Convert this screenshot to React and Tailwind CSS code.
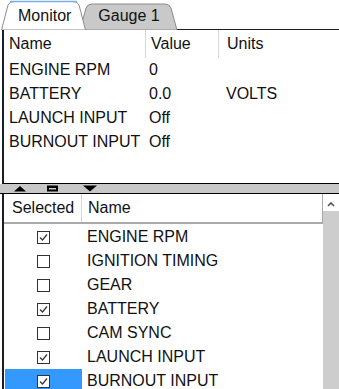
import React from "react";

const monitorRows = [
  { name: "ENGINE RPM", value: "0", units: "" },
  { name: "BATTERY", value: "0.0", units: "VOLTS" },
  { name: "LAUNCH INPUT", value: "Off", units: "" },
  { name: "BURNOUT INPUT", value: "Off", units: "" },
];

const channels = [
  { name: "ENGINE RPM", checked: true },
  { name: "IGNITION TIMING", checked: false },
  { name: "GEAR", checked: false },
  { name: "BATTERY", checked: true },
  { name: "CAM SYNC", checked: false },
  { name: "LAUNCH INPUT", checked: true },
  { name: "BURNOUT INPUT", checked: true, selected: true },
];

/* tab outlines */
const TabShapes = () => (
  <svg className="absolute inset-0" width="339" height="30" viewBox="0 0 339 30">
    <path
      d="M80 30 L86 8 Q87.5 4 92 4 L165 4 Q169.5 4 171 8 L177 30 Z"
      fill="#c9c9c9"
      stroke="#8c8c8c"
      strokeWidth="1"
    />
    <path
      d="M1.5 30 L8 5 Q9.5 1.5 14 1.5 L73 1.5 Q77.5 1.5 79 5 L85.5 30 Z"
      fill="#ffffff"
      stroke="#8c8c8c"
      strokeWidth="1"
    />
    <path d="M10 1.5 L77 1.5" stroke="#7aaee6" strokeWidth="1.5" />
  </svg>
);

const Checkbox = ({ checked }) => (
  <svg width="13" height="13" viewBox="0 0 13 13">
    <rect x="0.5" y="0.5" width="12" height="12" fill="#fff" stroke="#333" />
    {checked && (
      <path d="M3 6.5 L5.5 9 L10 3.5" fill="none" stroke="#333" strokeWidth="1.2" />
    )}
  </svg>
);

export default function App() {
  return (
    <div className="w-[339px] h-[389px] overflow-hidden bg-white text-[16px] text-[#111] font-['Liberation_Sans',Arial,sans-serif] flex flex-col">
      {/* Tabs */}
      <div className="relative h-[29px] shrink-0">
        <TabShapes />
        <div className="relative flex items-center h-[29px] pt-[2px]">
          <span className="pl-[18px] leading-none">Monitor</span>
          <span className="pl-[27px] leading-none">Gauge 1</span>
        </div>
      </div>

      {/* Monitor list */}
      <div className="ml-[2px] h-[155px] shrink-0 border-l-2 border-t border-[#1c1c28] border-b border-b-black flex flex-col">
        <div className="flex h-[28px] items-center">
          <div className="w-[142px] h-full pl-[5px] flex items-center border-r border-[#d6d6d6]">Name</div>
          <div className="w-[73px] h-full pl-[5px] flex items-center border-r border-[#d6d6d6]">Value</div>
          <div className="pl-[8px]">Units</div>
        </div>
        {monitorRows.map((r) => (
          <div key={r.name} className="flex h-[24px] items-center">
            <div className="w-[143px] pl-[5px] whitespace-nowrap">{r.name}</div>
            <div className="w-[77px] pl-[2px]">{r.value}</div>
            <div className="pl-[2px]">{r.units}</div>
          </div>
        ))}
      </div>

      {/* Splitter */}
      <div className="h-[10px] shrink-0 bg-[#c8c8c8] border-b border-black flex items-center">
        <svg width="110" height="9" viewBox="0 0 110 9">
          <path d="M14 7.5 L20 2 L26 7.5 Z" fill="#000" />
          <rect x="47" y="1.5" width="11" height="6" fill="#000" />
          <rect x="49" y="4" width="7" height="1.5" fill="#c8c8c8" />
          <path d="M83 1.5 L97 1.5 L90 7.5 Z" fill="#000" />
        </svg>
      </div>

      {/* Channel list */}
      <div className="flex flex-1 min-h-0">
        <div className="ml-[2px] flex-1 border-l-2 border-[#1c1c28] flex flex-col">
          <div className="flex h-[30px] shrink-0 border-b-2 border-r border-[#a9a9a9] items-center">
            <div className="w-[78px] h-full pl-[8px] flex items-center border-r border-[#d6d6d6]">Selected</div>
            <div className="pl-[6px]">Name</div>
          </div>
          <div className="pt-[1px] flex flex-col">
            {channels.map((c) => (
              <div key={c.name} className="flex h-[24px] shrink-0 items-center">
                <div
                  className={`ml-[1px] w-[77px] h-full flex items-center pl-[32px] ${
                    c.selected ? "bg-[#3399ff]" : ""
                  }`}
                >
                  <Checkbox checked={c.checked} />
                </div>
                <div className="pl-[5px] whitespace-nowrap">{c.name}</div>
              </div>
            ))}
          </div>
        </div>
        {/* Scrollbar */}
        <div className="w-[16px] shrink-0 flex flex-col">
          <div className="h-[17px] flex items-center justify-center pt-[2px]">
            <svg width="8" height="6" viewBox="0 0 8 6">
              <path d="M1 5 L4 2 L7 5" fill="none" stroke="#555" strokeWidth="1.6" />
            </svg>
          </div>
          <div className="flex-1 bg-[#cdcdcd]" />
        </div>
      </div>
    </div>
  );
}
